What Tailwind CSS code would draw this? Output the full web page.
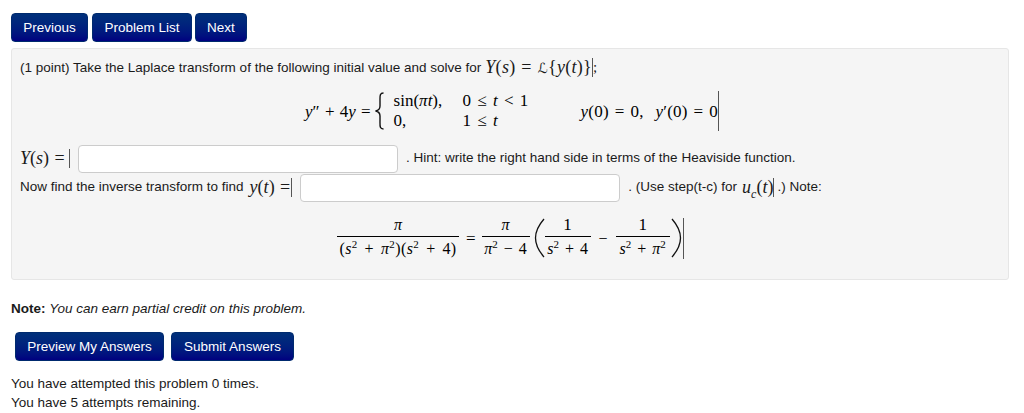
<!DOCTYPE html>
<html>
<head>
<meta charset="utf-8">
<script src="https://cdn.jsdelivr.net/npm/@tailwindcss/browser@4"></script>
</head>
<body class="bg-white font-['Liberation_Sans',Arial,sans-serif] text-[13.5px] leading-[19px] text-[#1a1a1a] overflow-hidden">
<div class="w-[1024px] h-[413px] pl-[11px] pt-[13px]">
  <div class="flex gap-[4px] h-[29px]">
    <div class="w-[77px] flex items-center justify-center rounded-[4px] border border-[#002a6e] bg-gradient-to-b from-[#00307a] to-[#000080] text-white">Previous</div>
    <div class="w-[100px] flex items-center justify-center rounded-[4px] border border-[#002a6e] bg-gradient-to-b from-[#00307a] to-[#000080] text-white">Problem List</div>
    <div class="w-[52px] -ml-[1px] flex items-center justify-center rounded-[4px] border border-[#002a6e] bg-gradient-to-b from-[#00307a] to-[#000080] text-white">Next</div>
  </div>

  <div class="mt-[6px] w-[998px] h-[232px] bg-[#f5f5f5] border border-[#e6e6e6] rounded-[3px] pl-[8px] pt-[8px]">
    <div class="h-[20px] flex items-center">
      <span>(1 point) Take the Laplace transform of the following initial value and solve for</span>
      <span class="ml-[4px] pt-[2px] font-['Liberation_Serif',serif] text-[18px] tracking-[0.3px] [word-spacing:1px] whitespace-pre"><i>Y</i>(<i>s</i>) = <span class="font-['DejaVu_Sans',sans-serif] text-[14px]">ℒ</span>{<i>y</i>(<i>t</i>)}</span>
      <span class="w-px h-[19px] bg-[#555]"></span><span class="font-['Liberation_Serif',serif] text-[15px]">;</span>
    </div>

    <div class="mt-[11px] h-[46px] flex items-center font-['Liberation_Serif',serif] text-[17px] text-black">
      <span class="ml-[285px] whitespace-pre [word-spacing:1px]"><i>y</i>″ + 4<i>y</i> =</span>
      <svg class="ml-[2px]" width="12" height="38" viewBox="0 0 12 38" fill="none" stroke="#111" stroke-width="1.4"><path d="M10.5 1C6.5 1 7 4 7 9V14C7 17 5.5 18.5 2.5 19C5.5 19.5 7 21 7 24V29C7 34 6.5 37 10.5 37"/></svg>
      <div class="ml-[9px] grid grid-cols-[69px_65px] leading-[20px]">
        <span>sin(<i>πt</i>),</span><span class="whitespace-pre [word-spacing:2px]">0 ≤ <i>t</i> &lt; 1</span>
        <span>0,</span><span class="whitespace-pre [word-spacing:2px]">1 ≤ <i>t</i></span>
      </div>
      <span class="ml-[53px] whitespace-pre tracking-[0.2px] [word-spacing:1.5px]"><i>y</i>(0) = 0,  <i>y</i>′(0) = 0</span>
      <span class="w-px h-[40px] bg-[#555]"></span>
    </div>

    <div class="mt-[10px] h-[29px] flex items-center">
      <span class="w-[50px] font-['Liberation_Serif',serif] text-[18px] whitespace-pre [word-spacing:1px]"><i>Y</i>(<i>s</i>) =</span>
      <span class="w-px h-[19px] bg-[#555] -ml-px"></span>
      <div class="ml-[8px] w-[320px] h-[28px] bg-white border border-[#ccc] rounded-[4px]"></div>
      <span class="ml-[8px] pb-[2px]">. Hint: write the right hand side in terms of the Heaviside function.</span>
    </div>
    <div class="h-[29px] flex items-center">
      <span class="pb-[2px]">Now find the inverse transform to find</span>
      <span class="ml-[6px] font-['Liberation_Serif',serif] text-[18px] whitespace-pre [word-spacing:1px]"><i>y</i>(<i>t</i>) =</span>
      <span class="w-px h-[19px] bg-[#555] ml-px"></span>
      <div class="ml-[8px] w-[320px] h-[28px] bg-white border border-[#ccc] rounded-[4px]"></div>
      <span class="ml-[8px] pb-[2px]">. (Use step(t-c) for</span>
      <span class="ml-[5px] font-['Liberation_Serif',serif] text-[18px] whitespace-pre"><i>u<sub class="text-[12px] align-[-2px] leading-none">c</sub></i>(<i>t</i>)</span>
      <span class="w-px h-[19px] bg-[#555]"></span>
      <span class="ml-[3px] pb-[2px]">.) Note:</span>
    </div>

    <div class="mt-[12px] h-[48px] flex items-center font-['Liberation_Serif',serif] text-[16px] text-black">
      <div class="ml-[317px] w-[122px] flex flex-col items-center">
        <i class="h-[18px] leading-[14px]">π</i>
        <span class="w-full h-px bg-black"></span>
        <span class="h-[22px] leading-[24px] whitespace-pre tracking-[0.4px] [word-spacing:2.5px]">(<i>s</i><sup class="text-[11px]">2</sup> + <i>π</i><sup class="text-[11px]">2</sup>)(<i>s</i><sup class="text-[11px]">2</sup> + 4)</span>
      </div>
      <span class="ml-[7px] text-[17px]">=</span>
      <div class="ml-[6px] w-[48px] flex flex-col items-center">
        <i class="h-[18px] leading-[14px]">π</i>
        <span class="w-full h-px bg-black"></span>
        <span class="h-[22px] leading-[24px] whitespace-pre [word-spacing:2px]"><i>π</i><sup class="text-[11px]">2</sup> − 4</span>
      </div>
      <svg class="ml-[3px]" width="12" height="40" viewBox="0 0 12 40" fill="none" stroke="#111" stroke-width="1.3"><path d="M11 1C4 9 2.5 15 2.5 20C2.5 25 4 31 11 39"/></svg>
      <div class="w-[46px] flex flex-col items-center">
        <span class="h-[18px] leading-[14px] text-[17px]">1</span>
        <span class="w-full h-px bg-black"></span>
        <span class="h-[22px] leading-[24px] whitespace-pre [word-spacing:2px]"><i>s</i><sup class="text-[11px]">2</sup> + 4</span>
      </div>
      <span class="ml-[8px]">−</span>
      <div class="ml-[8px] w-[54px] flex flex-col items-center">
        <span class="h-[18px] leading-[14px] text-[17px]">1</span>
        <span class="w-full h-px bg-black"></span>
        <span class="h-[22px] leading-[24px] whitespace-pre [word-spacing:2px]"><i>s</i><sup class="text-[11px]">2</sup> + <i>π</i><sup class="text-[11px]">2</sup></span>
      </div>
      <svg class="ml-[1px]" width="12" height="40" viewBox="0 0 12 40" fill="none" stroke="#111" stroke-width="1.3"><path d="M1 1C8 9 9.5 15 9.5 20C9.5 25 8 31 1 39"/></svg>
      <span class="w-px h-[41px] bg-[#555]"></span>
    </div>
  </div>

  <p class="mt-[19px] h-[19px]"><b>Note:</b> <i>You can earn partial credit on this problem.</i></p>

  <div class="mt-[14px] ml-[4px] flex gap-[7px] h-[29px]">
    <div class="w-[149px] flex items-center justify-center rounded-[4px] border border-[#002a6e] bg-gradient-to-b from-[#00307a] to-[#000080] text-white">Preview My Answers</div>
    <div class="w-[123px] flex items-center justify-center rounded-[4px] border border-[#002a6e] bg-gradient-to-b from-[#00307a] to-[#000080] text-white">Submit Answers</div>
  </div>

  <p class="mt-[13px]">You have attempted this problem 0 times.</p>
  <p>You have 5 attempts remaining.</p>
</div>
</body>
</html>
